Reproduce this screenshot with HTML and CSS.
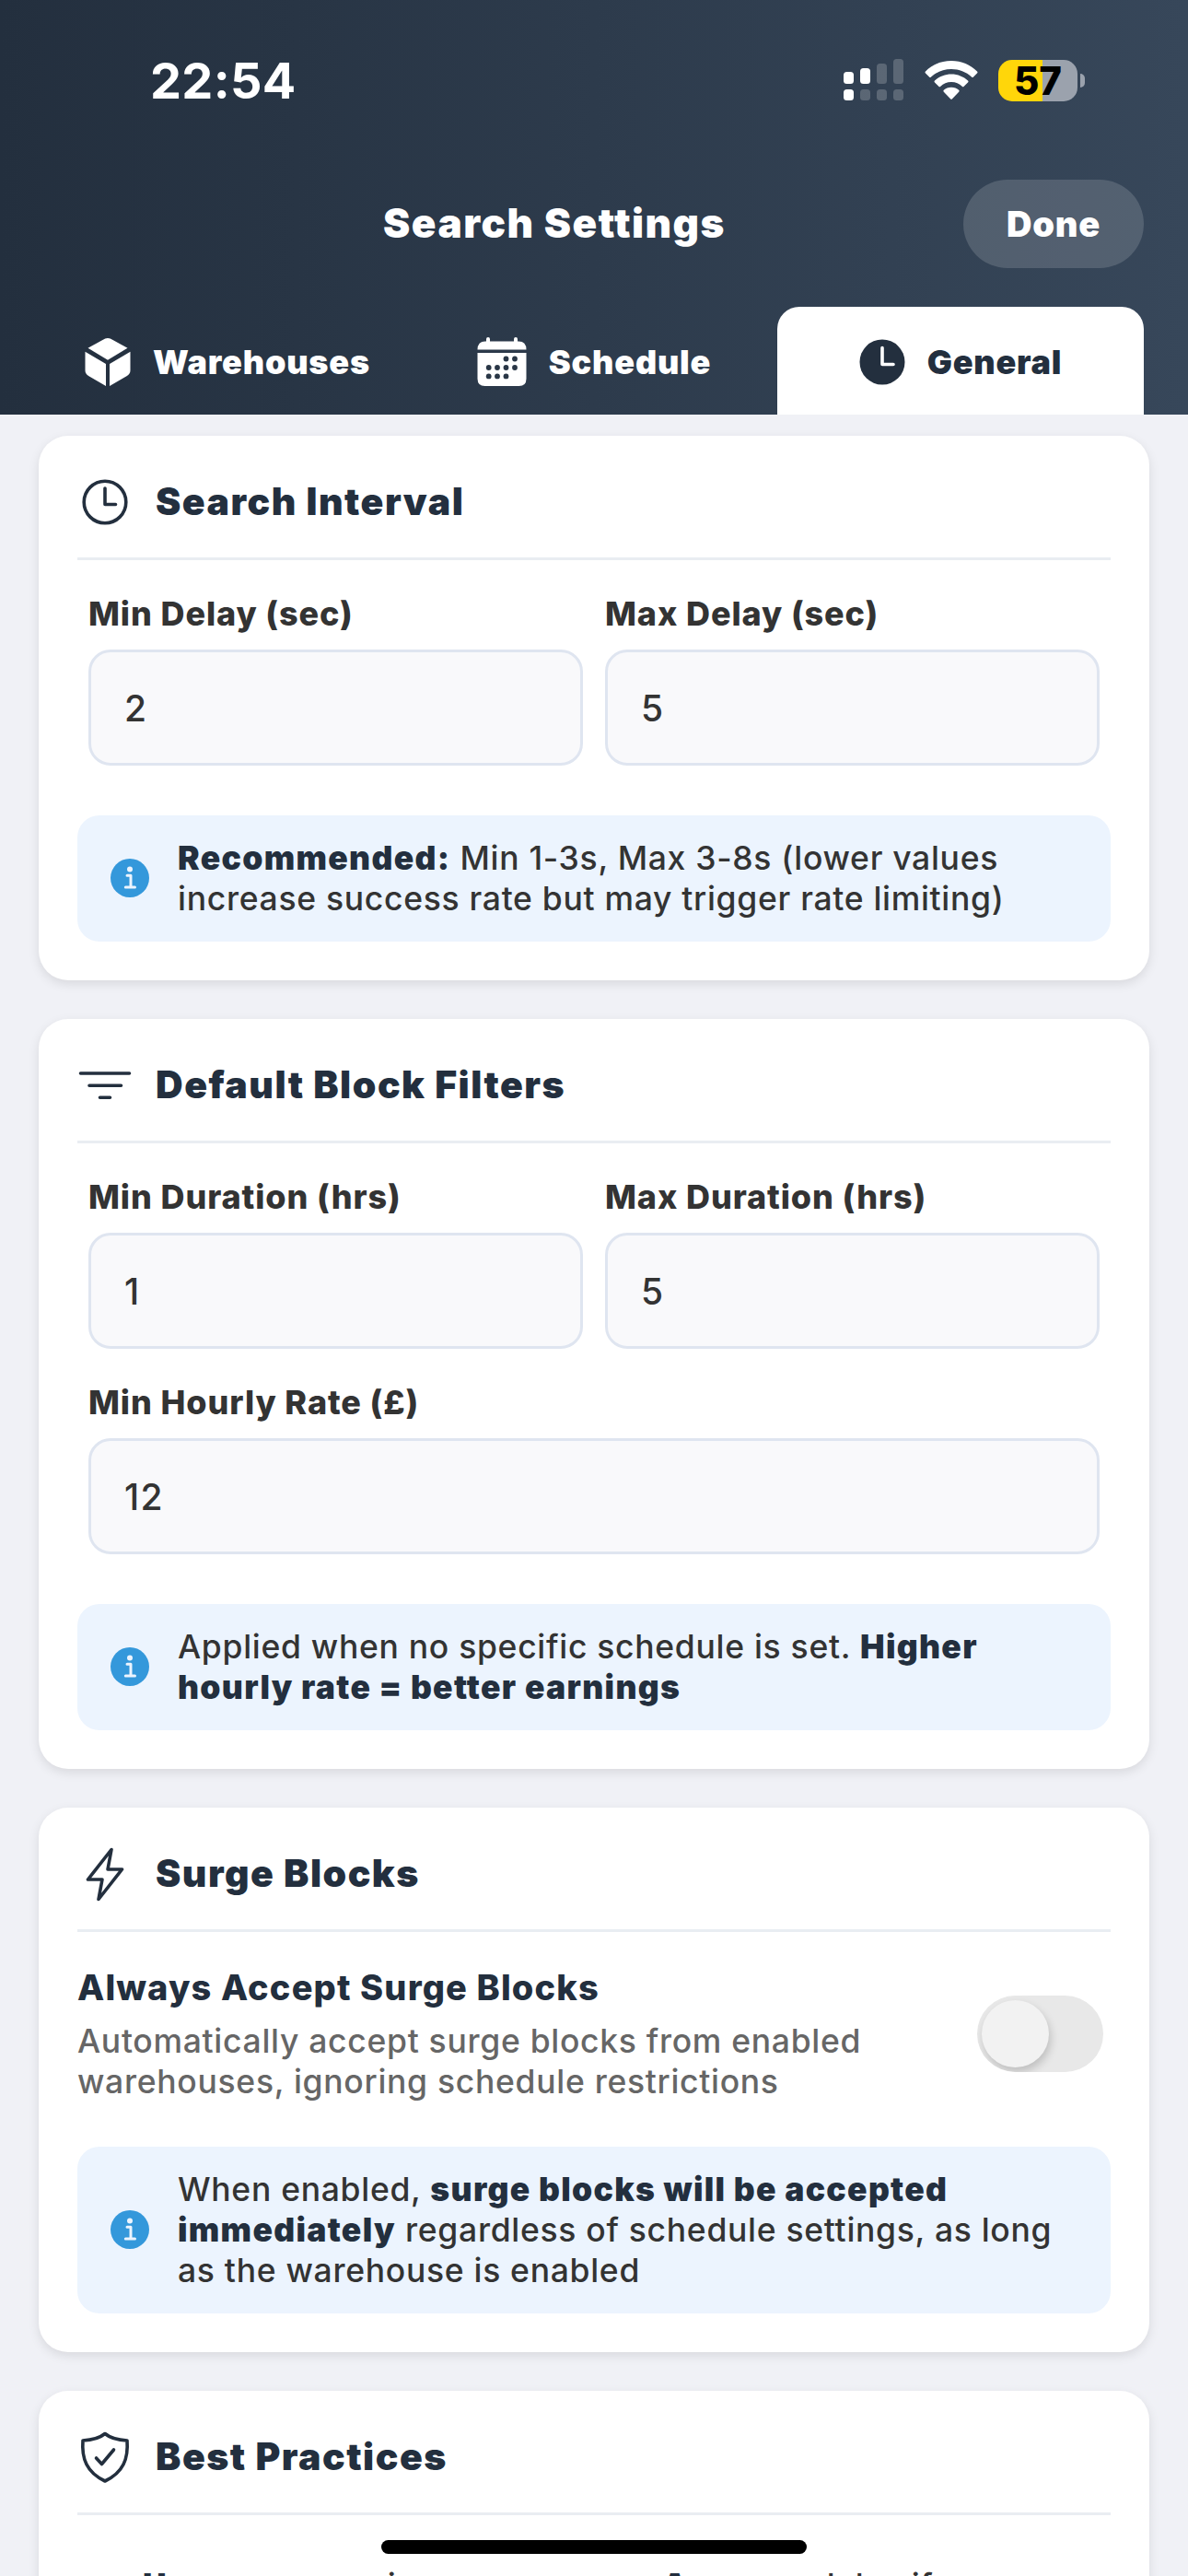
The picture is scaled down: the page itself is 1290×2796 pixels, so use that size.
FILE: index.html
```html
<!DOCTYPE html>
<html lang="en">

<head>
    <meta charset="UTF-8">
    <meta name="viewport" content="width=device-width, initial-scale=1.0">
    <title>Search Settings</title>
    <link rel="stylesheet" href="styles.css">
</head>

<body>
    <header class="header">
        <div class="status-bar">
            <span class="time">22:54</span>
            <div class="status-icons">
                <svg class="signal" width="66" height="46" viewBox="0 0 66 46" fill="#fff">
                    <rect x="0" y="14" width="11" height="13" rx="3.5"/>
                    <rect x="18" y="10" width="11" height="17" rx="3.5"/>
                    <rect x="36" y="5" width="11" height="22" rx="3.5" opacity=".2"/>
                    <rect x="54" y="0" width="11" height="27" rx="3.5" opacity=".2"/>
                    <rect x="0" y="33" width="11" height="12" rx="3.5"/>
                    <rect x="18" y="33" width="11" height="12" rx="3.5" opacity=".2"/>
                    <rect x="36" y="33" width="11" height="12" rx="3.5" opacity=".2"/>
                    <rect x="54" y="33" width="11" height="12" rx="3.5" opacity=".2"/>
                </svg>
                <svg class="wifi" width="58" height="44" viewBox="0 0 58 44" fill="#fff">
                    <path d="M29 1C18 1 8 5.300 1 12.500q-1 1 0 2l4 4q1 1 2 0C13 13 20.500 10 29 10s16 3 22 8.500q1 1 2 0l4-4q1-1 0-2C50 5.300 40 1 29 1z"/>
                    <path d="M29 15.500c-7 0-13.300 2.700-18 7q-1 1 0 2l4.300 4.200q1 1 2 0c3-2.800 7-4.700 11.700-4.700s8.700 1.900 11.700 4.700q1 1 2 0l4.300-4.200q1-1 0-2c-4.700-4.300-11-7-18-7z"/>
                    <path d="M29 29.700c-3.300 0-6 1.100-8.200 3q-1 1 0 2l7.200 7.600q1 1 2 0l7.200-7.600q1-1 0-2c-2.200-1.900-4.900-3-8.200-3z"/>
                </svg>
                <div class="battery">
                    <span class="battery-level">57</span>
                    <span class="battery-tip"></span>
                </div>
            </div>
        </div>

        <div class="nav">
            <h1 class="nav-title">Search Settings</h1>
            <button class="done">Done</button>
        </div>

        <nav class="tabs">
            <a class="tab">
                <svg width="50" height="54" viewBox="0 0 50 54" fill="#fff">
                    <path d="M22.200 1.600q2.800-1.400 5.600 0L46.500 11.800 25 24.800 3.500 11.800z"/>
                    <path d="M.5 15.800L23 29v24L4.500 42.300Q.5 40 .5 36z"/>
                    <path d="M49.500 15.800L27 29v24l18.500-10.700q4-2.300 4-6.300z"/>
                </svg>
                <span>Warehouses</span>
            </a>
            <a class="tab">
                <svg width="54" height="54" viewBox="0 0 54 54">
                    <path d="M12 2v8M42 2v8" stroke="#fff" stroke-width="4" stroke-linecap="round"/>
                    <path d="M.5 13.500Q.5 4.500 9 4.500h36q8.500 0 8.500 9z" fill="#fff"/>
                    <path d="M.5 17h53v28q0 8-8 8h-37q-8 0-8-8z" fill="#fff"/>
                    <g fill="#293646">
                        <circle cx="31.500" cy="23.500" r="2.900"/><circle cx="41" cy="23.500" r="2.900"/>
                        <circle cx="12.700" cy="33" r="2.900"/><circle cx="22" cy="33" r="2.900"/><circle cx="31.500" cy="33" r="2.900"/><circle cx="41" cy="33" r="2.900"/>
                        <circle cx="12.700" cy="42.400" r="2.900"/><circle cx="22" cy="42.400" r="2.900"/><circle cx="31.500" cy="42.400" r="2.900"/>
                    </g>
                </svg>
                <span>Schedule</span>
            </a>
            <a class="tab active">
                <svg width="50" height="50" viewBox="0 0 50 50">
                    <circle cx="25" cy="25" r="24.500" fill="#232f3e"/>
                    <path d="M25 9.500V27.500h12" fill="none" stroke="#fff" stroke-width="3.600" stroke-linecap="round" stroke-linejoin="round"/>
                </svg>
                <span>General</span>
            </a>
        </nav>
    </header>

    <main class="content">
        <section class="card">
            <div class="card-header">
                <svg class="card-icon" width="60" height="60" viewBox="0 0 60 60">
                    <circle cx="30" cy="30" r="22.800"/>
                    <path d="M30 15v17.500h11.500"/>
                </svg>
                <h2>Search Interval</h2>
            </div>
            <div class="row">
                <div class="field">
                    <label for="minDelay">Min Delay (sec)</label>
                    <input id="minDelay" type="text" value="2">
                </div>
                <div class="field">
                    <label for="maxDelay">Max Delay (sec)</label>
                    <input id="maxDelay" type="text" value="5">
                </div>
            </div>
            <div class="info">
                <svg width="42" height="42" viewBox="0 0 42 42">
                    <circle cx="21" cy="21" r="21" fill="#3498db"/>
                    <circle cx="21" cy="11.500" r="3" fill="#ecf4fe"/>
                    <path d="M18 18.200h4V31M16.300 31h10.200" fill="none" stroke="#ecf4fe" stroke-width="3" stroke-linecap="round" stroke-linejoin="round"/>
                </svg>
                <p><b>Recommended:</b> Min 1-3s, Max 3-8s (lower values<br>increase success rate but may trigger rate limiting)</p>
            </div>
        </section>

        <section class="card">
            <div class="card-header">
                <svg class="card-icon" width="60" height="60" viewBox="0 0 60 60">
                    <path d="M3.500 17h53M13 30.200h34.500M24.500 43.200h11"/>
                </svg>
                <h2>Default Block Filters</h2>
            </div>
            <div class="row">
                <div class="field">
                    <label for="minDuration">Min Duration (hrs)</label>
                    <input id="minDuration" type="text" value="1">
                </div>
                <div class="field">
                    <label for="maxDuration">Max Duration (hrs)</label>
                    <input id="maxDuration" type="text" value="5">
                </div>
            </div>
            <div class="row">
                <div class="field">
                    <label for="minRate">Min Hourly Rate (£)</label>
                    <input id="minRate" type="text" value="12">
                </div>
            </div>
            <div class="info">
                <svg width="42" height="42" viewBox="0 0 42 42">
                    <circle cx="21" cy="21" r="21" fill="#3498db"/>
                    <circle cx="21" cy="11.500" r="3" fill="#ecf4fe"/>
                    <path d="M18 18.200h4V31M16.300 31h10.200" fill="none" stroke="#ecf4fe" stroke-width="3" stroke-linecap="round" stroke-linejoin="round"/>
                </svg>
                <p>Applied when no specific schedule is set. <b>Higher<br>hourly rate = better earnings</b></p>
            </div>
        </section>

        <section class="card">
            <div class="card-header">
                <svg class="card-icon" width="60" height="60" viewBox="0 0 60 60">
                    <path d="M37 3.500L11.500 36H27l-4 21.500L48.500 25H33z"/>
                </svg>
                <h2>Surge Blocks</h2>
            </div>
            <div class="toggle-row">
                <div class="toggle-text">
                    <h3>Always Accept Surge Blocks</h3>
                    <p>Automatically accept surge blocks from enabled<br>warehouses, ignoring schedule restrictions</p>
                </div>
                <div class="toggle"><span class="knob"></span></div>
            </div>
            <div class="info">
                <svg width="42" height="42" viewBox="0 0 42 42">
                    <circle cx="21" cy="21" r="21" fill="#3498db"/>
                    <circle cx="21" cy="11.500" r="3" fill="#ecf4fe"/>
                    <path d="M18 18.200h4V31M16.300 31h10.200" fill="none" stroke="#ecf4fe" stroke-width="3" stroke-linecap="round" stroke-linejoin="round"/>
                </svg>
                <p>When enabled, <b>surge blocks will be accepted<br>immediately</b> regardless of schedule settings, as long<br>as the warehouse is enabled</p>
            </div>
        </section>

        <section class="card">
            <div class="card-header">
                <svg class="card-icon" width="60" height="60" viewBox="0 0 60 60">
                    <path d="M30 4.500C24 9.500 15 11.500 6 12 4.500 31.500 10 46.500 30 56 50 46.500 55.500 31.500 54 12 45 11.500 36 9.500 30 4.500z"/>
                    <path d="M20.500 31l6 6.500 13-15.500"/>
                </svg>
                <h2>Best Practices</h2>
            </div>
            <p class="tip"><b>Use</b> more spacing across areas <b>Amazon</b> delay if</p>
        </section>
    </main>

    <div class="home-indicator"></div>
</body>

</html>
```

FILE: styles.css
```css
* {
    box-sizing: border-box;
    margin: 0;
    padding: 0;
}

body {
    width: 1290px;
    height: 2796px;
    overflow: hidden;
    position: relative;
    font-family: Inter, "Liberation Sans", sans-serif;
    background-color: #f0f1f6;
    color: #333;
}

.header {
    height: 450px;
    padding: 0 48px;
    background: linear-gradient(90deg, #232f3e, #37475a);
    color: #fff;
}

.status-bar {
    height: 173px;
    padding: 1px 64px 0 115px;
    display: flex;
    align-items: center;
    justify-content: space-between;
}

.time {
    font-size: 54px;
    font-weight: 750;
    letter-spacing: 0.3px;
}

.status-icons {
    display: flex;
    align-items: center;
}

.wifi {
    margin: 0 22px;
}

.battery {
    display: flex;
    align-items: center;
    gap: 3px;
}

.battery-level {
    width: 86px;
    height: 45px;
    border-radius: 15px;
    background: linear-gradient(90deg, #ffd60a 48px, #9ba2ad 48px);
    color: #000;
    font-size: 42px;
    font-weight: 800;
    line-height: 45px;
    text-align: center;
}

.battery-tip {
    width: 5px;
    height: 15px;
    border-radius: 0 5px 5px 0;
    background-color: #9ba2ad;
}

.nav {
    height: 160px;
    padding: 22px 0 42px 110px;
    display: flex;
    align-items: center;
}

.nav-title {
    flex: 1;
    padding-bottom: 3px;
    text-align: center;
    font-size: 44px;
    font-weight: 900;
    letter-spacing: 1.5px;
}

.done {
    width: 196px;
    height: 96px;
    border: none;
    border-radius: 48px;
    background-color: rgba(255, 255, 255, 0.15);
    color: #fff;
    font-family: inherit;
    font-size: 38px;
    font-weight: 900;
    letter-spacing: 0.8px;
}

.tabs {
    display: flex;
}

.tab {
    flex: 1;
    height: 117px;
    padding-top: 3px;
    display: flex;
    align-items: center;
    justify-content: center;
    gap: 24px;
    font-size: 36px;
    font-weight: 900;
    letter-spacing: 0.8px;
}

.tab.active {
    border-radius: 24px 24px 0 0;
    background-color: #fff;
    color: #232f3e;
}

.content {
    padding: 23px 42px 0;
    display: flex;
    flex-direction: column;
    gap: 42px;
}

.card {
    padding: 42px;
    border-radius: 32px;
    background-color: #fff;
    box-shadow: 0 4px 12px rgba(0, 0, 0, 0.1);
}

.card-header {
    height: 93px;
    padding-bottom: 31px;
    border-bottom: 3px solid #e9edf2;
    display: flex;
    align-items: center;
    gap: 25px;
}

.card-icon {
    fill: none;
    stroke: #232f3e;
    stroke-width: 3.6;
    stroke-linecap: round;
    stroke-linejoin: round;
}

.card h2 {
    padding-bottom: 1px;
    font-size: 41px;
    font-weight: 900;
    letter-spacing: 1.5px;
    color: #232f3e;
}

.row {
    padding: 0 12px;
    display: flex;
    gap: 24px;
}

.field {
    flex: 1;
}

.field label {
    display: block;
    height: 97px;
    padding-top: 35px;
    font-size: 36px;
    font-weight: 800;
    line-height: 46px;
    letter-spacing: 0.9px;
}

.field input {
    display: block;
    width: 100%;
    height: 126px;
    padding: 0 36px;
    border: 3px solid #dfe5f0;
    border-radius: 24px;
    background-color: #f9f9fb;
    color: #333;
    font-family: inherit;
    font-size: 39px;
    font-weight: 500;
    letter-spacing: 1.2px;
}

.info {
    margin-top: 54px;
    padding: 25px 36px 24px;
    border-radius: 24px;
    background-color: #ecf4fe;
    display: flex;
    align-items: center;
    gap: 31px;
}

.info svg {
    margin-bottom: 2px;
}

.info p {
    font-size: 35.5px;
    font-weight: 500;
    line-height: 44px;
    letter-spacing: 0.7px;
    white-space: nowrap;
}

.info b {
    font-weight: 900;
    letter-spacing: 1.3px;
    color: #232f3e;
}

.toggle-row {
    height: 179px;
    padding: 32px 8px 0 0;
    display: flex;
    justify-content: space-between;
}

.toggle-text h3 {
    font-size: 38px;
    font-weight: 800;
    line-height: 56px;
    letter-spacing: 1.15px;
    color: #232f3e;
}

.toggle-text p {
    margin-top: 9px;
    font-size: 35.5px;
    font-weight: 500;
    line-height: 44px;
    letter-spacing: 0.7px;
    color: #666;
}

.toggle {
    width: 137px;
    height: 83px;
    margin-top: 37px;
    padding: 5px;
    border-radius: 42px;
    background-color: #e8e8e8;
    overflow: hidden;
}

.knob {
    display: block;
    width: 73px;
    height: 73px;
    border-radius: 50%;
    background-color: #f2f2f2;
    box-shadow: 2px 5px 10px rgba(0, 0, 0, 0.18);
}

.tip {
    padding: 55px 0 0 71px;
    font-size: 35.5px;
    font-weight: 500;
    line-height: 44px;
    letter-spacing: 0.6px;
    white-space: nowrap;
}

.tip b {
    font-weight: 900;
    letter-spacing: 1.3px;
    color: #232f3e;
}

.home-indicator {
    position: absolute;
    left: 414px;
    bottom: 24px;
    width: 462px;
    height: 15px;
    border-radius: 8px;
    background-color: #000;
}
```
